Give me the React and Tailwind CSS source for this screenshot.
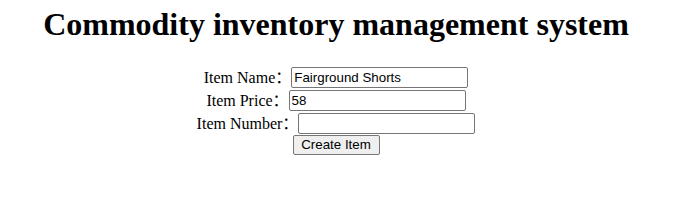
const inputCls =
  "w-[177px] h-[21px] border border-[#767676] rounded-[2px] px-[2px] py-[1px] bg-white text-black outline-none font-['Arial','Liberation_Sans',sans-serif] text-[13.33px]";

function Field({ label, value }) {
  return (
    <div className="flex justify-center items-center h-[23px]">
      <span>{label}</span>
      <input type="text" defaultValue={value} className={inputCls} />
    </div>
  );
}

export default function App() {
  return (
    <div className="w-[672px] bg-white text-black font-['Liberation_Serif','Noto_Sans_CJK_SC',serif] text-[16px]">
      <h1 className="text-center text-[32px] font-bold leading-[37px] mt-[6px] mb-[23px]">
        Commodity inventory management system
      </h1>
      <form onSubmit={(e) => e.preventDefault()}>
        <Field label="Item Name：" value="Fairground Shorts" />
        <Field label="Item Price：" value="58" />
        <Field label="Item Number：" value="" />
        <div className="flex justify-center">
          <button
            type="submit"
            className="w-[87px] h-[20px] border border-[#767676] rounded-[2px] bg-[#efefef] text-black font-['Arial','Liberation_Sans',sans-serif] text-[13.33px] leading-[16px]"
          >
            Create Item
          </button>
        </div>
      </form>
    </div>
  );
}
